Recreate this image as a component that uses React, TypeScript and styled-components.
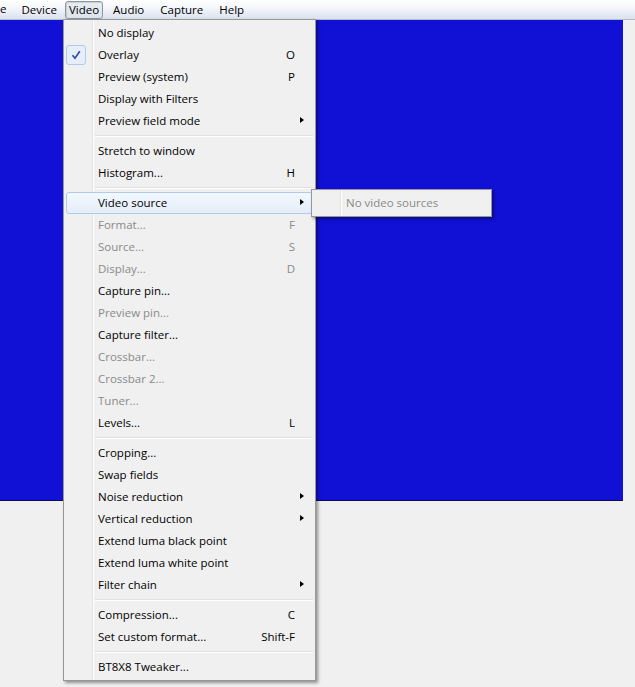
import React from "react";
import styled, { createGlobalStyle, css } from "styled-components";

const GlobalStyle = createGlobalStyle`
  html, body {
    margin: 0;
    padding: 0;
    background: #f0f0f0;
    font-family: "Open Sans", "Noto Sans", sans-serif;
    font-size: 11.5px;
    color: #000;
  }
  #root {
    width: 635px;
    height: 687px;
    position: relative;
    overflow: hidden;
  }
`;

const Window = styled.div`
  position: relative;
  width: 635px;
  height: 687px;
  background: #f0f0f0;
`;

const MenuBar = styled.div`
  display: flex;
  align-items: center;
  height: 19px;
  border-bottom: 1px solid #b6bcc6;
  background: linear-gradient(to bottom, #ffffff 0%, #f4f6fa 40%, #dbe2ee 100%);
`;

const MenuTitle = styled.div<{ $open?: boolean }>`
  height: 18px;
  line-height: 16px;
  padding: 0 7px;
  box-sizing: border-box;
  border: 1px solid transparent;
  border-radius: 3px;
  white-space: nowrap;
  ${(p) =>
    p.$open &&
    css`
      padding: 0 3px;
      margin: 0 2px 0 0;
      border-color: #8e96a2;
      background: linear-gradient(to bottom, #e9edf3, #dde3ec);
      box-shadow: inset 1px 1px 1px rgba(0, 0, 0, 0.12);
    `}
`;

const Clipped = styled(MenuTitle)`
  padding: 0 7px 0 0;
  border-width: 0;
`;

const VideoArea = styled.div`
  width: 623px;
  height: 480px;
  background: #1111d6;
  border-bottom: 1px solid #0a0a50;
`;

const gutter = css`
  background: linear-gradient(
      to right,
      transparent 28px,
      #e2e3e3 28px,
      #e2e3e3 29px,
      #ffffff 29px,
      #ffffff 30px,
      transparent 30px
    ),
    #f0f0f0;
`;

const Popup = styled.div<{ $left: number; $top: number; $width: number }>`
  position: absolute;
  left: ${(p) => p.$left}px;
  top: ${(p) => p.$top}px;
  width: ${(p) => p.$width}px;
  box-sizing: border-box;
  padding: 2px;
  border: 1px solid #979797;
  ${gutter}
  box-shadow: 2px 2px 3px rgba(0, 0, 0, 0.4);
`;

const Row = styled.div<{ $disabled?: boolean; $active?: boolean }>`
  display: grid;
  grid-template-columns: 27px 1fr auto 17px;
  align-items: center;
  height: 22px;
  padding-bottom: 2px;
  box-sizing: border-box;
  border: 1px solid transparent;
  border-radius: 3px;
  color: ${(p) => (p.$disabled ? "#8a8a8a" : "#000")};
  white-space: nowrap;
  ${(p) =>
    p.$active &&
    css`
      border-color: #aecbec;
      background: linear-gradient(to bottom, #f3f8fe, #e3edf9);
    `}
`;

const Gutter = styled.span`
  align-self: stretch;
  display: flex;
  align-items: center;
  margin-bottom: -2px;
`;

const CheckBox = styled.div`
  width: 20px;
  height: 20px;
  margin-left: -1px;
  box-sizing: border-box;
  border: 1px solid #aecbec;
  border-radius: 3px;
  background: #e6eefa;
  display: flex;
  align-items: center;
  justify-content: center;
`;

const Label = styled.span`
  padding-left: 4px;
`;

const Shortcut = styled.span`
  text-align: right;
`;

const Arrow = styled.span`
  justify-self: start;
  margin-left: 5px;
  width: 0;
  height: 0;
  border-top: 3.5px solid transparent;
  border-bottom: 3.5px solid transparent;
  border-left: 4px solid #000;
`;

const Separator = styled.div`
  height: 8px;
  display: flex;
  align-items: center;
  padding-left: 29px;
  &::after {
    content: "";
    flex: 1;
    border-top: 1px solid #e0e0e0;
    border-bottom: 1px solid #ffffff;
    height: 0;
  }
`;

type Item =
  | { sep: true }
  | {
      sep?: false;
      label: string;
      key?: string;
      sub?: boolean;
      disabled?: boolean;
      checked?: boolean;
      active?: boolean;
    };

const items: Item[] = [
  { label: "No display" },
  { label: "Overlay", key: "O", checked: true },
  { label: "Preview (system)", key: "P" },
  { label: "Display with Filters" },
  { label: "Preview field mode", sub: true },
  { sep: true },
  { label: "Stretch to window" },
  { label: "Histogram...", key: "H" },
  { sep: true },
  { label: "Video source", sub: true, active: true },
  { label: "Format...", key: "F", disabled: true },
  { label: "Source...", key: "S", disabled: true },
  { label: "Display...", key: "D", disabled: true },
  { label: "Capture pin..." },
  { label: "Preview pin...", disabled: true },
  { label: "Capture filter..." },
  { label: "Crossbar...", disabled: true },
  { label: "Crossbar 2...", disabled: true },
  { label: "Tuner...", disabled: true },
  { label: "Levels...", key: "L" },
  { sep: true },
  { label: "Cropping..." },
  { label: "Swap fields" },
  { label: "Noise reduction", sub: true },
  { label: "Vertical reduction", sub: true },
  { label: "Extend luma black point" },
  { label: "Extend luma white point" },
  { label: "Filter chain", sub: true },
  { sep: true },
  { label: "Compression...", key: "C" },
  { label: "Set custom format...", key: "Shift-F" },
  { sep: true },
  { label: "BT8X8 Tweaker..." },
];

const Check = () => (
  <svg width="10" height="10" viewBox="0 0 10 10">
    <path d="M1.5 5.2 L4 8.2 L8.8 1.2" fill="none" stroke="#2a4aa8" strokeWidth="1.6" />
  </svg>
);

export default function App() {
  return (
    <Window>
      <GlobalStyle />
      <MenuBar>
        <Clipped>e</Clipped>
        <MenuTitle>Device</MenuTitle>
        <MenuTitle $open>Video</MenuTitle>
        <MenuTitle>Audio</MenuTitle>
        <MenuTitle>Capture</MenuTitle>
        <MenuTitle>Help</MenuTitle>
      </MenuBar>
      <VideoArea />

      <Popup $left={63} $top={19} $width={253}>
        {items.map((it, i) =>
          it.sep ? (
            <Separator key={i} />
          ) : (
            <Row key={i} $disabled={it.disabled} $active={it.active}>
              <Gutter>
                {it.checked && (
                  <CheckBox>
                    <Check />
                  </CheckBox>
                )}
              </Gutter>
              <Label>{it.label}</Label>
              <Shortcut>{it.key}</Shortcut>
              {it.sub ? <Arrow /> : <span />}
            </Row>
          )
        )}
      </Popup>

      <Popup $left={311} $top={189} $width={181}>
        <Row $disabled>
          <Gutter />
          <Label>No video sources</Label>
          <span />
          <span />
        </Row>
      </Popup>
    </Window>
  );
}
